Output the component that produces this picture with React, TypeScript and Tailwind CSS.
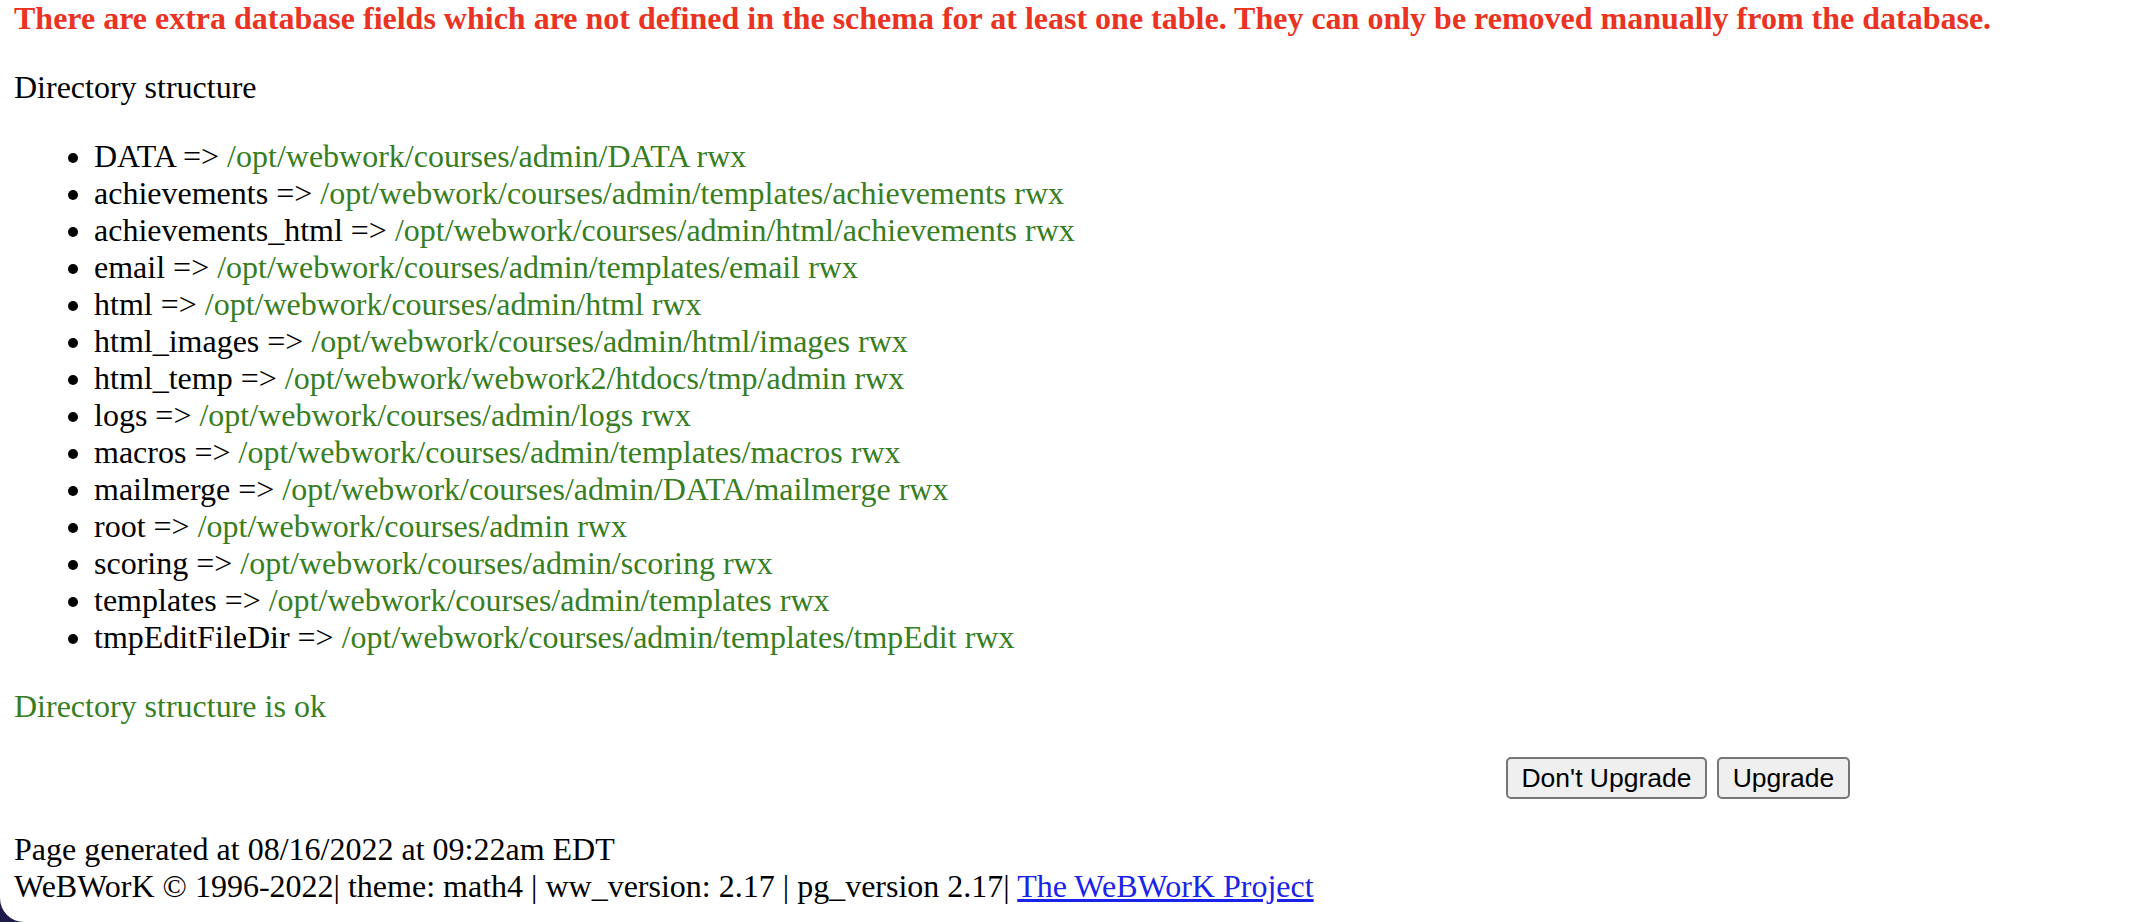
export default function App() {
  const dirs: [string, string][] = [
    ["DATA", "/opt/webwork/courses/admin/DATA"],
    ["achievements", "/opt/webwork/courses/admin/templates/achievements"],
    ["achievements_html", "/opt/webwork/courses/admin/html/achievements"],
    ["email", "/opt/webwork/courses/admin/templates/email"],
    ["html", "/opt/webwork/courses/admin/html"],
    ["html_images", "/opt/webwork/courses/admin/html/images"],
    ["html_temp", "/opt/webwork/webwork2/htdocs/tmp/admin"],
    ["logs", "/opt/webwork/courses/admin/logs"],
    ["macros", "/opt/webwork/courses/admin/templates/macros"],
    ["mailmerge", "/opt/webwork/courses/admin/DATA/mailmerge"],
    ["root", "/opt/webwork/courses/admin"],
    ["scoring", "/opt/webwork/courses/admin/scoring"],
    ["templates", "/opt/webwork/courses/admin/templates"],
    ["tmpEditFileDir", "/opt/webwork/courses/admin/templates/tmpEdit"],
  ];

  return (
    <div className="h-[922px] bg-[#1e1b4b] overflow-hidden">
      <div className="h-full bg-white rounded-bl-[24px] pl-[14px] pr-[15px] font-['Liberation_Serif','Times_New_Roman',serif] text-[32px] leading-[37px] text-black">
        <p className="font-bold text-[#ea3323] whitespace-nowrap">
          There are extra database fields which are not defined in the schema for at least one table. They can only be removed manually from the database.
        </p>

        <p className="mt-8">Directory structure</p>

        <ul className="mt-8 list-disc pl-[80px]">
          {dirs.map(([name, path]) => (
            <li key={name}>
              {name} =&gt; <span className="text-[#377e22]">{path} rwx</span>
            </li>
          ))}
        </ul>

        <p className="mt-8 text-[#377e22]">Directory structure is ok</p>

        <div className="mt-8 flex justify-end gap-[10px] pr-[267px] font-['Liberation_Sans',Arial,sans-serif] text-[26.5px] leading-none">
          <button className="w-[201px] h-[42px] border-2 border-[#767676] rounded-[5px] bg-[#efefef] text-black">
            Don't Upgrade
          </button>
          <button className="w-[133px] h-[42px] border-2 border-[#767676] rounded-[5px] bg-[#efefef] text-black">
            Upgrade
          </button>
        </div>

        <div className="mt-8">
          <p>Page generated at 08/16/2022 at 09:22am EDT</p>
          <p>
            WeBWorK © 1996-2022| theme: math4 | ww_version: 2.17 | pg_version 2.17|{" "}
            <a href="#" className="text-[#1a23e8] underline">
              The WeBWorK Project
            </a>
          </p>
        </div>
      </div>
    </div>
  );
}
